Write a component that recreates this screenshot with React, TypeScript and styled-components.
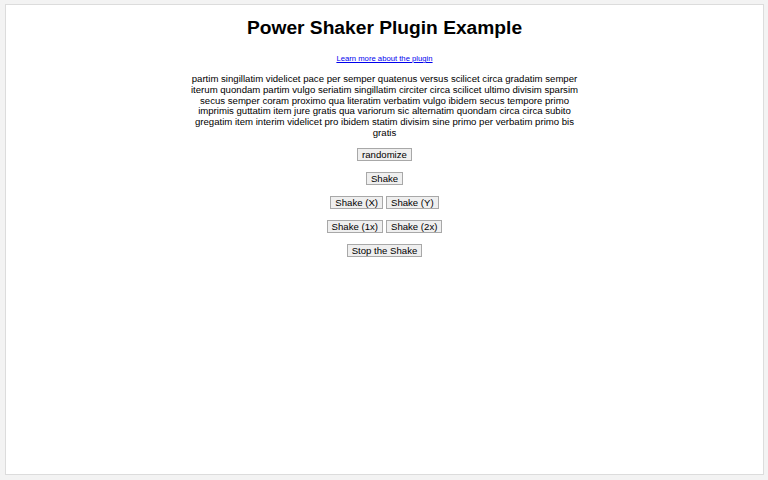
import styled, { createGlobalStyle } from "styled-components";

const GlobalStyle = createGlobalStyle`
  html, body {
    margin: 0;
    padding: 0;
    background: #f3f3f3;
  }
  body {
    padding: 4px 4px 4px 5px;
    font-family: "Liberation Sans", Arial, sans-serif;
  }
`;

const Page = styled.div`
  box-sizing: border-box;
  height: 471px;
  background: #ffffff;
  border: 1px solid #dcdcdc;
  display: flex;
  flex-direction: column;
  align-items: center;
  color: #000;
`;

const Title = styled.h1`
  margin: 13px 0 0;
  font-size: 19.2px;
  font-weight: bold;
  line-height: 20px;
`;

const PluginLink = styled.a`
  margin-top: 16px;
  font-size: 7.7px;
  color: #0000ee;
  text-decoration: underline;
`;

const Lorem = styled.p`
  width: 392px;
  margin: 11px 0 0;
  font-size: 9.6px;
  line-height: 10.8px;
  text-align: center;
`;

const Controls = styled.div`
  display: flex;
  flex-direction: column;
  align-items: center;
  gap: 11px;
  margin-top: 9px;
`;

const Row = styled.div`
  display: flex;
  gap: 3px;
`;

const Button = styled.button`
  font-family: "Liberation Sans", Arial, sans-serif;
  font-size: 9.6px;
  line-height: 11px;
  height: 13px;
  padding: 0 4px;
  background: #efefef;
  border: 1px solid #a8a8a8;
  border-radius: 0;
  color: #000;
`;

export default function App() {
  return (
    <>
      <GlobalStyle />
      <Page>
        <Title>Power Shaker Plugin Example</Title>
        <PluginLink href="#">Learn more about the plugin</PluginLink>
        <Lorem>
          partim singillatim videlicet pace per semper quatenus versus scilicet
          circa gradatim semper iterum quondam partim vulgo seriatim singillatim
          circiter circa scilicet ultimo divisim sparsim secus semper coram
          proximo qua literatim verbatim vulgo ibidem secus tempore primo
          imprimis guttatim item jure gratis qua variorum sic alternatim
          quondam circa circa subito gregatim item interim videlicet pro ibidem
          statim divisim sine primo per verbatim primo bis gratis
        </Lorem>
        <Controls>
          <Button>randomize</Button>
          <Button>Shake</Button>
          <Row>
            <Button>Shake (X)</Button>
            <Button>Shake (Y)</Button>
          </Row>
          <Row>
            <Button>Shake (1x)</Button>
            <Button>Shake (2x)</Button>
          </Row>
          <Button>Stop the Shake</Button>
        </Controls>
      </Page>
    </>
  );
}
